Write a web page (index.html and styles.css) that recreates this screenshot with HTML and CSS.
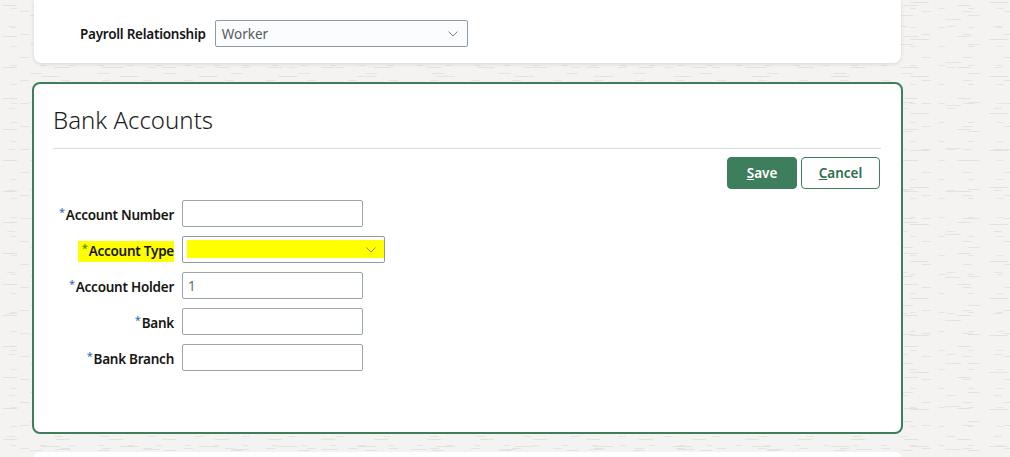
FILE: index.html
```html
<!DOCTYPE html>
<html lang="en">
<head>
<meta charset="utf-8">
<title>Bank Accounts</title>
<link rel="stylesheet" href="styles.css">
</head>
<body>
<div class="page">
  <section class="card top-card">
    <div class="payroll-row">
      <span class="payroll-label">Payroll Relationship</span>
      <div class="select payroll-select">
        <span class="select-value">Worker</span>
        <svg class="chev" width="10" height="6" viewBox="0 0 10 6"><path d="M0.5 0.5 L5 5 L9.5 0.5" fill="none" stroke="#7d858c" stroke-width="1"/></svg>
      </div>
    </div>
  </section>

  <section class="card bank-card">
    <h2 class="title">Bank Accounts</h2>
    <div class="toolbar">
      <button class="btn btn-save"><u>S</u>ave</button>
      <button class="btn btn-cancel"><u>C</u>ancel</button>
    </div>
    <div class="form">
      <label class="lbl"><span class="req">*</span>Account Number</label>
      <div class="input"></div>

      <label class="lbl"><span class="hl"><span class="req req-hl">*</span>Account Type</span></label>
      <div class="input select type-select">
        <span class="hl-fill"></span>
        <svg class="chev" width="10" height="6" viewBox="0 0 10 6"><path d="M0.5 0.5 L5 5 L9.5 0.5" fill="none" stroke="#8a8a3a" stroke-width="1"/></svg>
      </div>

      <label class="lbl"><span class="req">*</span>Account Holder</label>
      <div class="input"><span class="input-value">1</span></div>

      <label class="lbl"><span class="req">*</span>Bank</label>
      <div class="input"></div>

      <label class="lbl"><span class="req">*</span>Bank Branch</label>
      <div class="input"></div>
    </div>
  </section>

  <section class="card bottom-card"></section>
</div>
</body>
</html>
```

FILE: styles.css
```css
html, body {
  margin: 0;
  padding: 0;
  overflow: hidden;
}

body {
  width: 1010px;
  height: 457px;
  font-family: "Noto Sans", "Open Sans", sans-serif;
  color: #161513;
  background-color: #f4f3f1;
  background-image:
    conic-gradient(from 270deg at 14px 1px, #e3e2df 0 25%, transparent 0),
    conic-gradient(from 270deg at 9px 1px, #e4e3e0 0 25%, transparent 0),
    conic-gradient(from 270deg at 19px 1px, #e3e2df 0 25%, transparent 0),
    conic-gradient(from 270deg at 6px 1px, #e5e4e1 0 25%, transparent 0),
    conic-gradient(from 270deg at 12px 1px, #e4e3e0 0 25%, transparent 0),
    conic-gradient(from 270deg at 8px 1px, #e5e4e1 0 25%, transparent 0),
    conic-gradient(from 270deg at 16px 1px, #e4e3e0 0 25%, transparent 0);
  background-size: 53px 31px, 41px 23px, 79px 37px, 29px 19px, 67px 29px, 47px 41px, 89px 43px;
  background-position: 3px 5px, 20px 11px, 41px 2px, 11px 8px, 30px 15px, 7px 26px, 55px 19px;
}

.page {
  width: 871px;
  margin-left: 32px;
  display: flex;
  flex-direction: column;
}

.card {
  background: #ffffff;
}

/* ---------- top card ---------- */
.top-card {
  margin: 0 2px;
  height: 63px;
  box-sizing: border-box;
  padding: 20px 0 16px 46px;
  border-radius: 0 0 8px 8px;
  box-shadow: 0 1px 4px rgba(0, 0, 0, 0.12);
}

.payroll-row {
  display: flex;
  align-items: center;
  gap: 9px;
}

.payroll-label {
  font-size: 13.5px;
  font-weight: 600;
  letter-spacing: -0.25px;
}

.select {
  display: flex;
  align-items: center;
  justify-content: space-between;
  box-sizing: border-box;
  height: 27px;
  border: 1px solid #8e9ba5;
  border-radius: 2px;
}

.payroll-select {
  width: 253px;
  background: #fbfcfe;
  padding: 0 9px 0 6px;
}

.select-value {
  font-size: 13.5px;
  color: #555a5f;
}

/* ---------- bank card ---------- */
.bank-card {
  margin-top: 19px;
  height: 352px;
  box-sizing: border-box;
  border: 2px solid #3d7e5d;
  border-radius: 8px;
  padding: 20px 20px 0 19px;
}

.title {
  margin: 0;
  font-size: 24px;
  line-height: 32px;
  font-weight: 300;
  color: #1d1c1a;
  padding-bottom: 12px;
  border-bottom: 1px solid #d5dde3;
}

.toolbar {
  display: flex;
  justify-content: flex-end;
  gap: 4px;
  margin-top: 8px;
  padding-right: 1px;
}

.btn {
  box-sizing: border-box;
  height: 32px;
  border-radius: 4px;
  font-family: "Noto Sans", "Open Sans", sans-serif;
  font-size: 13.5px;
  font-weight: 600;
  padding: 0;
  cursor: pointer;
}

.btn-save {
  width: 70px;
  background: #3d7e5d;
  border: 1px solid #3d7e5d;
  color: #ffffff;
}

.btn-cancel {
  width: 79px;
  background: #ffffff;
  border: 1px solid #3d7e5d;
  color: #2f6e4f;
}

.form {
  margin-top: 11px;
  display: grid;
  grid-template-columns: 121px auto;
  column-gap: 8px;
  row-gap: 9px;
  justify-content: start;
  align-items: center;
}

.lbl {
  text-align: right;
  font-size: 13.5px;
  font-weight: 600;
  letter-spacing: -0.25px;
  white-space: nowrap;
}

.req {
  color: #2b6cb5;
  font-size: 11px;
  font-weight: 400;
  vertical-align: 4px;
  margin-right: 1px;
}

.req-hl {
  color: #4a7a22;
}

.hl {
  background: #ffff00;
  padding: 1px 0 2px 4px;
}

.input {
  box-sizing: border-box;
  width: 181px;
  height: 27px;
  border: 1px solid #9aa5ad;
  border-radius: 2px;
  background: #ffffff;
  display: flex;
  align-items: center;
  padding-left: 5px;
}

.input-value {
  font-size: 13.5px;
  color: #6b6f73;
}

.type-select {
  width: 203px;
  padding: 3px 0 4px 4px;
  align-items: stretch;
  position: relative;
  border-color: #8e9ba5;
}

.hl-fill {
  flex: 1;
  background: #ffff00;
}

.type-select .chev {
  position: absolute;
  right: 8px;
  top: 10px;
}

.bottom-card {
  margin: 18px 2px 0;
  height: 5px;
  border-radius: 8px 8px 0 0;
}
```
